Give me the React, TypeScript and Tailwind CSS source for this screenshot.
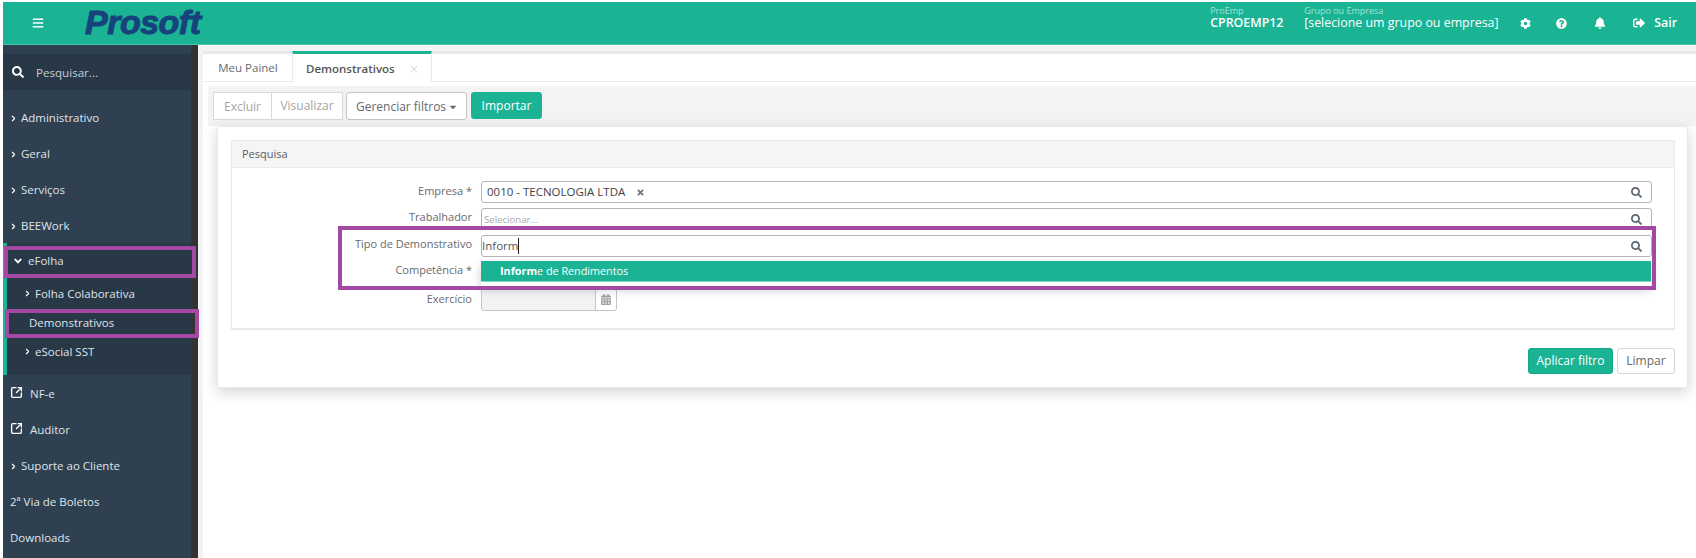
import React from 'react';
import { FaAngleDown, FaBars, FaBell, FaCalendarAlt, FaCaretDown, FaCog, FaQuestionCircle, FaSearch, FaSignOutAlt, FaTimes } from 'react-icons/fa';
import { ChevronRight, SquareArrowOutUpRight, X } from 'lucide-react';

const Item: React.FC<{ label: string; arrow?: boolean; ext?: boolean }> = ({ label, arrow, ext }) => (
  <div className="h-9 flex items-center pl-[7px] pt-[2px] text-[11.5px] font-medium text-[#dfe4ed]">
    {arrow && <ChevronRight className="w-[9px] h-[11px] -ml-[1px] mr-[3px] text-white" strokeWidth={3} />}
    {ext && <SquareArrowOutUpRight className="w-[13px] h-[13px] mr-[7px] -mt-[3px] text-white" strokeWidth={2.5} />}
    {label}
  </div>
);

const SubItem: React.FC<{ label: string; arrow?: boolean }> = ({ label, arrow }) => (
  <div className={`h-[29px] flex items-center text-[11.5px] font-medium text-[#dfe4ed] ${arrow ? 'pl-[16px]' : 'pl-[22px]'}`}>
    {arrow && <ChevronRight className="w-[9px] h-[11px] mr-[3px] text-white" strokeWidth={3} />}
    {label}
  </div>
);

const Field: React.FC<{ label: string; className: string; labelClass?: string; children?: React.ReactNode }> = ({ label, className, labelClass, children }) => (
  <div className={`flex ${className}`}>
    <div className={`w-[249px] shrink-0 pr-[9px] text-right text-[11px] leading-[18px] text-[#676a6c] ${labelClass ?? ''}`}>{label}</div>
    {children}
  </div>
);

const SearchBox: React.FC<{ children?: React.ReactNode }> = ({ children }) => (
  <div className="flex-1 h-[22px] flex items-center bg-white border border-[#b5b5b5] rounded-[3px]">
    <div className="flex-1 flex items-center min-w-0">{children}</div>
    <FaSearch className="w-[11px] h-[11px] mr-[9px] text-[#5c6670]" />
  </div>
);

export default function App() {
  return (
    <div className="w-[1696px] h-[558px] overflow-hidden bg-white pt-[2px] pl-[3px] relative font-['Open_Sans',sans-serif]">
      {/* Header */}
      <header className="h-[43px] bg-[#1ab394] flex items-center text-white border-b border-[#4cc5ac]">
        <FaBars className="w-[12px] h-[12px] ml-[29px]" />
        <span className="ml-[41px] text-[34px] leading-none font-bold italic tracking-[-0.5px] text-[#17427c] [-webkit-text-stroke:1px_#17427c] font-['Liberation_Sans',sans-serif] -mt-[2px]">Prosoft</span>
        <div className="ml-auto self-stretch flex items-center">
          <div className="w-[94px] self-start mt-[4px]">
            <div className="text-[9px] leading-[9px] text-[#a4e3d5]">ProEmp</div>
            <div className="text-[12.4px] leading-[16px] font-semibold">CPROEMP12</div>
          </div>
          <div className="w-[212px] self-start mt-[4px]">
            <div className="text-[9px] leading-[9px] text-[#a4e3d5]">Grupo ou Empresa</div>
            <div className="text-[12.4px] leading-[16px] whitespace-nowrap">[selecione um grupo ou empresa]</div>
          </div>
          <FaCog className="w-[11px] h-[11px] ml-[4px]" />
          <FaQuestionCircle className="w-[11px] h-[11px] ml-[25px]" />
          <FaBell className="w-[12px] h-[12px] ml-[27px] -mt-[1px]" />
          <FaSignOutAlt className="w-[12px] h-[12px] ml-[27px]" />
          <span className="ml-[9px] mr-[19px] text-[12.4px] font-semibold">Sair</span>
        </div>
      </header>

      <div className="flex h-[513px]">
        {/* Sidebar */}
        <aside className="w-[195px] shrink-0 flex">
          <div className="w-[188px] bg-[#2f4050]">
            <div className="mt-[9px] h-[36px] bg-[#293846] flex items-center pl-[9px] text-[11.6px] text-[#c5ccd4]">
              <FaSearch className="w-[12px] h-[12px] text-white mr-[12px]" />
              <span className="pt-[1px]">Pesquisar...</span>
            </div>
            <div className="mt-[9px]">
              <Item label="Administrativo" arrow />
              <Item label="Geral" arrow />
              <Item label="Serviços" arrow />
              <Item label="BEEWork" arrow />
            </div>
            <div className="bg-[#293846] border-l-[4px] border-[#1ab394] h-[132px]">
              <div className="h-[36px] flex items-center pl-[7px] text-[11.5px] font-medium text-[#dfe4ed]">
                <FaAngleDown className="w-[8px] h-[12px] mr-[6px] text-white" />
                eFolha
              </div>
              <SubItem label="Folha Colaborativa" arrow />
              <SubItem label="Demonstrativos" />
              <SubItem label="eSocial SST" arrow />
            </div>
            <Item label="NF-e" ext />
            <Item label="Auditor" ext />
            <Item label="Suporte ao Cliente" arrow />
            <Item label="2ª Via de Boletos" />
            <Item label="Downloads" />
          </div>
          <div className="w-[7px] bg-[#333333]" />
        </aside>
        <div className="w-[5px] shrink-0 bg-[#f3f3f4]" />

        {/* Conteudo */}
        <main className="flex-1 min-w-0 bg-white">
          <div className="h-[37px] bg-[#f3f3f4] pt-[6px]">
            <div className="flex h-[31px] bg-white border-t-[3px] border-[#e7eaec]">
              <div className="ml-[1px] w-[88px] h-[28px] pt-[1px] flex items-center justify-center text-[11.5px] text-[#676a6c] border-b border-[#e7eaec]">Meu Painel</div>
              <div className="w-[140px] h-[31px] -mt-[3px] pt-[1px] border-t-[3px] border-x border-x-[#e7eaec] border-t-[#1ab394] flex items-center pl-[13px] text-[11.5px] font-semibold text-[#555] bg-white">
                Demonstrativos
                <X className="w-[12px] h-[12px] ml-[13px] text-[#c9c9c9]" strokeWidth={1.5} />
              </div>
              <div className="flex-1 h-[28px] border-b border-[#e7eaec]" />
            </div>
          </div>
          <div className="bg-[#f3f3f4] h-[40px] mt-[4px] ml-[5px] pt-[6px] pl-[5px] flex items-start">
            <div className="h-[28px] w-[59px] pt-[1px] flex items-center justify-center bg-white border border-[#d9d9d9] text-[12px] text-[#a5a5a5]">Excluir</div>
            <div className="h-[28px] w-[71px] flex items-center justify-center bg-white border border-l-0 border-[#d9d9d9] text-[12px] text-[#a5a5a5]">Visualizar</div>
            <div className="ml-[3px] h-[28px] w-[121px] pt-[1px] flex items-center justify-center bg-white border border-[#c4c4c4] rounded-[3px] text-[12px] text-[#676a6c]">
              Gerenciar filtros
              <FaCaretDown className="w-[8px] h-[10px] ml-[3px]" />
            </div>
            <div className="ml-[4px] h-[27px] w-[71px] pt-[1px] flex items-center justify-center bg-[#1ab394] border border-[#1ab394] rounded-[3px] text-[12px] text-white">Importar</div>
          </div>

          <div className="relative ml-[14px] w-[1471px] h-[262px] bg-white border border-[#e7eaec] rounded-[3px] shadow-[0_4px_14px_rgba(0,0,0,0.18)] pt-[13px] pl-[13px] pr-[12px]">
            <div className="h-[190px] border border-[#e7eaec] border-b-2">
              <div className="h-[27px] bg-[#f5f5f5] border-b border-[#e7eaec] flex items-center pl-[10px] text-[11px] text-[#5a5c5e]">Pesquisa</div>
              <div className="relative pt-[13px] pr-[22px]">
                <Field label="Empresa *" className="h-[27px]" labelClass="pt-[1px]">
                  <SearchBox>
                    <span className="pl-[5px] text-[11.5px] text-[#3f3f46]">0010 - TECNOLOGIA LTDA</span>
                    <FaTimes className="w-[9px] h-[9px] ml-[11px] text-[#6f7378]" />
                  </SearchBox>
                </Field>
                <Field label="Trabalhador" className="h-[27px]">
                  <SearchBox>
                    <span className="pl-[2px] mt-[2px] text-[9.6px] text-[#a9a9a9]">Selecionar...</span>
                  </SearchBox>
                </Field>
                <Field label="Tipo de Demonstrativo" className="h-[26px]">
                  <SearchBox>
                    <span className="text-[11.5px] text-[#50545a] border-r border-[#222] leading-[16px]">Inform</span>
                  </SearchBox>
                </Field>
                <Field label="Competência *" className="h-[27px]" />
                <Field label="Exercício" className="h-[23px]" labelClass="pt-[2px]">
                  <div className="w-[136px] h-[23px] flex border border-[#c4c4c4] rounded-[3px] bg-[#f3f3f3]">
                    <div className="flex-1" />
                    <div className="w-[21px] flex items-center justify-center bg-white border-l border-[#c4c4c4] rounded-r-[3px]">
                      <FaCalendarAlt className="w-[10px] h-[11px] text-[#a0a0a0]" />
                    </div>
                  </div>
                </Field>

                {/* dropdown do autocomplete */}
                <div className="absolute left-[249px] top-[93px] w-[1170px] h-[25px] bg-white shadow-[0_4px_10px_rgba(0,0,0,0.2)]">
                  <div className="h-[21px] pt-[1px] bg-[#1ab394] border-b border-[#7fd8c5] flex items-center pl-[19px] text-[10.8px] text-white">
                    <span className="font-bold">Inform</span>e de Rendimentos
                  </div>
                </div>
              </div>
            </div>
            <div className="flex justify-end gap-[4px] mt-[18px]">
              <div className="w-[85px] h-[26px] flex items-center justify-center bg-[#1ab394] border border-[#18a689] rounded-[3px] text-[12px] text-white">Aplicar filtro</div>
              <div className="w-[58px] h-[26px] flex items-center justify-center bg-white border border-[#d5d5d5] rounded-[3px] text-[12px] text-[#676a6c]">Limpar</div>
            </div>
          </div>
        </main>
      </div>

      {/* Marcacoes roxas por cima da tela */}
      <div className="absolute left-[4px] top-[246px] w-[192px] h-[32px] border-[4px] border-[#a349a4]" />
      <div className="absolute left-[5px] top-[309px] w-[194px] h-[29px] border-[4px] border-[#a349a4]" />
      <div className="absolute left-[338px] top-[226px] w-[1318px] h-[64px] border-[4px] border-[#a349a4]" />
    </div>
  );
}
